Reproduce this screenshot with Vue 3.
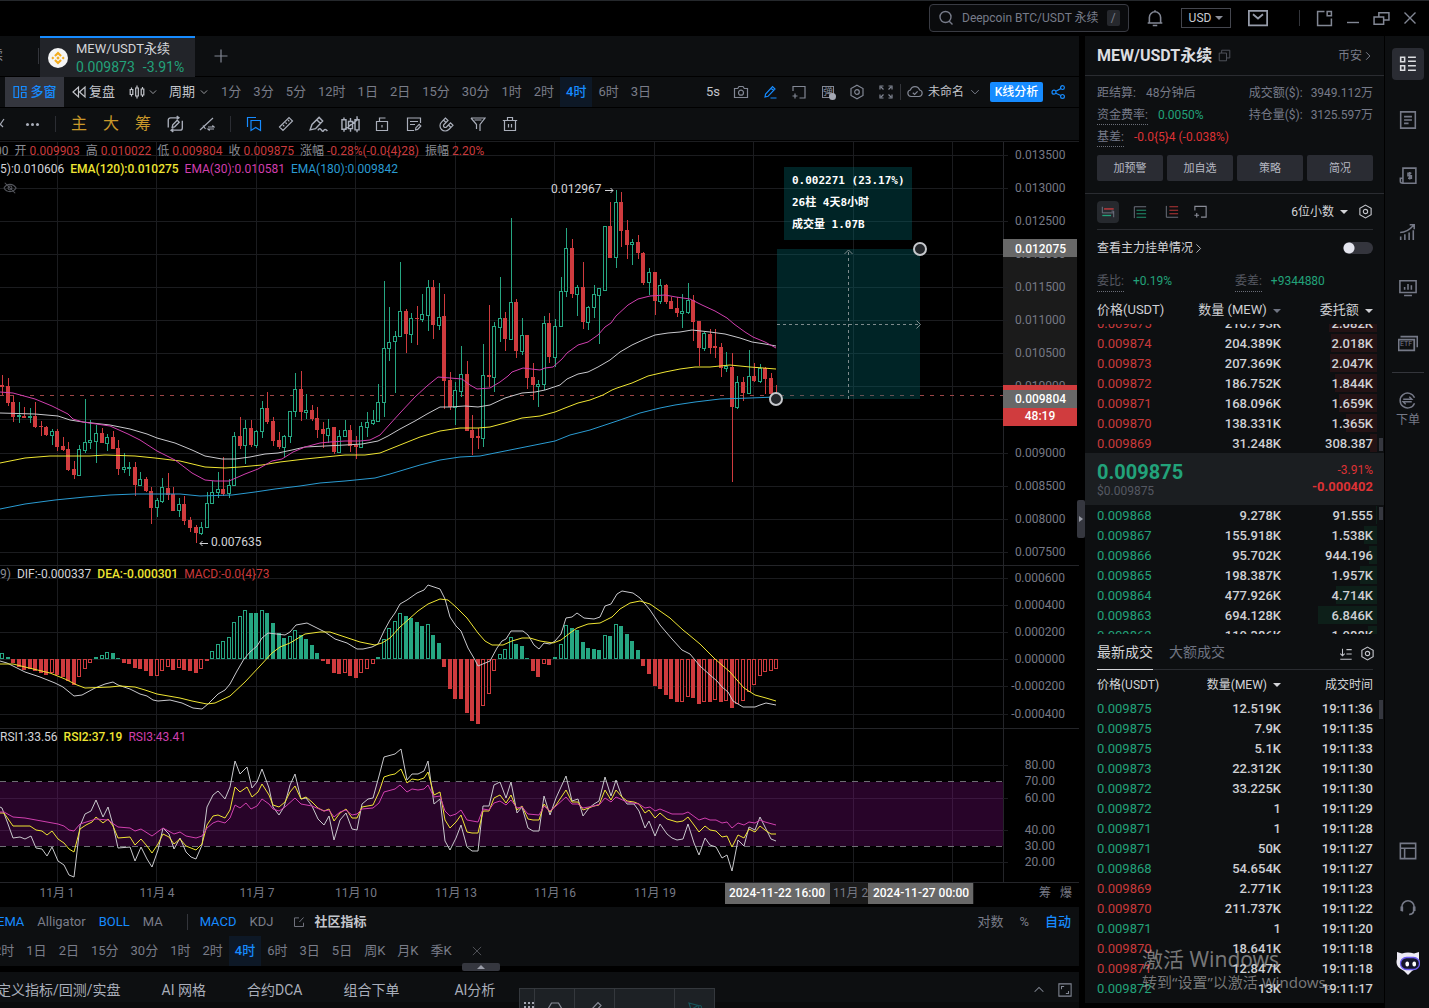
<script setup>
import { h } from 'vue'

const paths = {
  search: 'M7.5 1.5a5.5 5.5 0 1 0 0 11a5.5 5.5 0 0 0 0-11M11.5 11.5l3 3',
  bell: 'M3 12.5V7.5a5 5 0 0 1 10 0v5M1.5 12.5h13M8 1v1.5M6 14.7h4',
  mail: 'M.7 2.2h14.6v11.6H.7zM4 5l4 3.4L12 5',
  popout: 'M8 1.5H1.5v13h13V8M10.5 1.5h4v4h-4z',
  min: 'M2 12.5h12',
  restore: 'M1 6.5h9v7H1zM5.5 6.5V2.5h9.5v7H10',
  close: 'M2.5 2.5l11 11M13.5 2.5l-11 11',
  plus: 'M8 1.5v13M1.5 8h13',
  grid: 'M2 2.5h4.5v11H2zM9.5 2.5H14v3.5H9.500zM9.5 8.5H14v5H9.500z',
  rewind: 'M7.5 3v10L2 8zM14 3v10L8.5 8z',
  candles: 'M2.500 3.500v2M2.500 10.500v2M1.200 5.500h2.600v5H1.200zM8 1.500v2.500M8 12v2.500M6.700 4h2.600v8H6.700zM13.500 3v2M13.500 11v2M12.200 5h2.600v6h-2.600z',
  down: 'M3 5.5l5 5l5-5',
  up: 'M3 10l5-5l5 5',
  right: 'M5 2l6 6L5 14',
  camera: 'M1.5 4.5h3.200L6 2.5h4l1.3 2h3.200v9h-13zM8 6.2a2.500 2.500 0 1 0 0 5a2.500 2.500 0 0 0 0-5',
  pen: 'M3 13l.6-3L10.5 2.5l2.500 2.500L6 12.300zM8.500 14h6M9 4l2.500 2.500',
  addbox: 'M2 7V2.500h12V14H8.500M4 9.500v5M1.500 12h5',
  hex: 'M8 1.200l6 3.400v6.800l-6 3.400l-6-3.400V4.600zM8 5.700a2.300 2.300 0 1 0 0 4.600a2.300 2.300 0 0 0 0-4.600',
  polygon: 'M4.500 2h7l3.500 6l-3.500 6h-7L1 8z',
  marker: 'M3 13l1-4l7-7.500l3 3L7 12z',
  flag: 'M2 2l9 2.500L4 8.500zM13 4.500a1.500 2 0 1 0 0 4a1.500 2 0 0 0 0-4',
  expand: 'M2 5.500V2h3.500M10.500 2H14v3.500M14 10.500V14h-3.500M5.500 14H2v-3.500M3 3l2.500 2.500M13 3l-2.500 2.500M13 13l-2.500-2.500M3 13l2.500-2.500',
  cloud: 'M4 12.500a3.300 3.300 0 0 1-.6-6.500a4.800 4.800 0 0 1 9.200 0a3.300 3.300 0 0 1-.6 6.500zM5.800 8.800l1.800 1.700l3-3.200',
  share: 'M4 6.200a2 2 0 1 0 0 4a2 2 0 0 0 0-4M12.500 1.700a1.900 1.900 0 1 0 0 3.800a1.900 1.900 0 0 0 0-3.800M12.500 10.500a1.900 1.900 0 1 0 0 3.800a1.900 1.900 0 0 0 0-3.800M5.800 7.200l5-2.600M5.800 9.200l5 2.300',
  spark: 'M1 10l4 3L12 3M8 8l3 3',
  cyclePen: 'M2 11V4.500A2 2 0 0 1 4 2.500h7M9.500 1l2 1.500l-2 1.500M14.500 5v6.500a2 2 0 0 1-2 2H5M6.500 15L4.500 13.500L6.500 12M5.500 11l.5-2.200L10 4.700l1.700 1.700L7.700 10.500z',
  trend: 'M1 14L14 2M4 9.500l2.500 3.500M9 11h6l-1.700-1.500M15 13H9l1.700 1.500',
  bookmark: 'M1.500 11V1.500H10M5 4.500h9.500v10L9.700 11.500L5 14.500z',
  ruler: 'M1.500 11L11 1.500L14.500 5L5 14.500zM5 9l1.300 1.300M7.500 6.500l1.300 1.300M10 4l1.300 1.300',
  brush: 'M1 12.500L2.500 8L8.500 2L11.500 5L5.500 11.500zM6.500 4l3 3M7.500 13c2-4 3.500 2 4.500 .5s2-2 3.500 0',
  kbars: 'M2.500 2v2M2.500 12v2M.8 4h3.400v8H.8zM8 2.500v3M8 11.500v2.500M6.300 5.500h3.400v6H6.300zM13.500 1v3M13.500 12.500v2M11.800 4h3.400v8.500h-3.400zM2 13L14.500 3.500',
  lock: 'M2.500 5.500h11v9h-11zM5.500 5.500V2h6M8 9v2.500',
  note: 'M14.500 7V2h-13v12.500H8M4 5.500h8M4 8.500h5M9.500 14l.4-2.300l3.300-3.400l1.600 1.600l-3.200 3.500z',
  magnet: 'M7.500 2L3.500 6.200a5 5 0 0 0 7.300 7.300L15 9.300L12.500 6.800L8.500 11a1.700 1.700 0 0 1-2.500-2.500L10 4.500zM5.500 4L8 6.500M10.500 9l2.500 2.500',
  funnel: 'M1 2h14L10 8.500V15M6.500 13V8.500L1 2M4.500 4h7',
  trash: 'M.8 4.500h14.400M5.500 4.500V1.500h5v3M2.500 4.500v10h11v-10M6.500 8v3.500M9.500 8v3.500',
  eye: 'M1 8c3.500-5.500 10.500-5.500 14 0c-3.500 5.500-10.500 5.500-14 0M8 5.800a2.200 2.200 0 1 0 0 4.400a2.200 2.200 0 0 0 0-4.400M2 2l12 12',
  copy: 'M1.500 5h9v9.500h-9zM4.500 5V1.500h10v9.500h-4',
  sort: 'M4 2v8M1.500 7.500L4 10l2.500-2.500M8.500 3h6M8.500 8h6M1.500 14h13',
  list: 'M1.500 2h3.500v4H1.500zM1.500 9.500h3.500v4H1.500zM8 2h7M8 5.500h7M8 9.500h7M8 13.500h7',
  doc: 'M1.500 .8h13v14.400h-13zM4.500 5h7M4.500 8h7M4.500 11h4',
  bill: 'M3.500 1h11.500v13.500H3.500zM3.500 10H1.200v2.500a1.500 1.500 0 0 0 2.300 1.500M11 5.500H8v2.200h3V10H8M9.500 4.500v6.500',
  growth: 'M1.500 12v3M5.200 10v5M9 8.500v6.500M12.700 6.500v8.500M1 8.500c5 0 8-2 12-6.500M9.500 1.500h4v4',
  monitor: 'M.8 1.500h14.400v10.500H.8zM4.500 14.700h7M5 7v2.500M8 4.500v5M11 5.500v4',
  etf: 'M.5 4.500h12.500v8.500H.5zM2 2h13.500v8.500',
  order: 'M14.600 5.500A7 7 0 1 0 14.600 10.500M4 6.800h8L9.700 4.500M12 9.200H4l2.300 2.300',
  layout: 'M1.200 1.200h13.600v13.600H1.200zM1.200 5.500h13.600M5 5.500v9.300',
  headset: 'M2.500 8a5.500 5.500 0 0 1 11 0M2 7.500v4M3 7.500v4.500M13 7.500v4.500M14 7.500v4M13 12c-.5 2-2 2.500-4 2.700',
  edit: 'M8 2.500H2v11.500h12V9M8.500 8l5.500-6',
  frame: 'M1 1h14v14H1zM4 7V4h3M12 9v3H9',
}
const Icon = (props) =>
  h('svg', { viewBox: '0 0 16 16', width: props.size || 16, height: props.size || 16, class: 'ico', 'aria-hidden': 'true' }, [
    h('path', { d: paths[props.name] }),
  ])
Icon.props = ['name', 'size']

const periods = ['1分', '3分', '5分', '12时', '1日', '2日', '15分', '30分', '1时', '2时', '4时', '6时', '3日']
const footPeriods = ['2时', '1日', '2日', '15分', '30分', '1时', '2时', '4时', '6时', '3日', '5日', '周K', '月K', '季K']
const drawTools = ['bookmark', 'ruler', 'brush', 'kbars', 'lock', 'note', 'magnet', 'funnel', 'trash']

const STEP = 5.53
const barX = (i) => Math.round(2 + i * STEP)

// direction, high, body top, body bottom, low
const candles = `R 233 243 245 253,R 236 244 261 264,R 254 260 275 280,G 260 273 274 281,R 265 274 276 276,G 266 274 275 281,R 260 274 285 286,R 279 284 285 294,R 284 285 293 294,G 287 289 293 303
R 287 289 305 309,R 295 304 308 309,R 300 307 328 329,R 319 327 333 337,G 303 307 333 333,G 257 300 308 311,G 278 298 300 307,G 283 291 299 321,R 286 291 301 301,G 292 295 301 309
R 289 295 307 307,R 298 306 327 333,G 311 325 327 331,G 320 325 326 334,R 320 325 343 354,G 330 337 343 344,R 335 337 349 350,R 345 349 366 382,G 356 358 365 375,G 336 345 359 361
R 331 346 353 358,R 345 352 369 369,G 356 362 368 375,R 354 362 379 383,R 375 378 386 390,R 383 385 391 401,G 380 385 391 393,G 350 361 385 386,G 339 350 361 362,G 330 347 350 356
R 315 347 352 354,G 337 343 351 356,G 290 294 343 343,R 275 294 304 307,G 278 286 303 322,R 278 286 303 305,G 288 289 303 306,G 259 266 289 296,R 250 266 280 282,R 275 279 299 304
R 290 298 305 307,G 293 294 305 315,G 269 269 294 301,G 231 247 269 275,R 229 247 270 279,G 252 268 270 277,R 263 268 277 279,R 265 276 288 296,R 280 287 292 306,G 277 286 293 301
R 285 285 310 312,G 288 294 310 311,G 278 288 294 295,R 283 288 304 310,R 294 303 305 317,G 280 284 305 305,G 270 280 285 295,G 268 278 281 283,G 242 260 279 279,G 139 206 260 275
G 165 200 206 219,G 189 194 199 251,G 120 169 194 194,R 167 169 192 211,G 171 176 192 201,R 164 176 177 203,G 152 172 177 180,G 138 145 173 189,R 138 145 183 197,G 141 175 183 188
R 152 174 239 267,R 230 238 265 268,G 240 248 265 283,G 204 232 249 255,R 219 232 289 289,R 273 288 296 313,R 286 294 296 307,G 202 233 296 305,R 163 233 235 245,G 180 184 235 250
G 135 176 185 200,R 170 176 197 209,G 76 160 197 198,R 157 160 209 216,G 176 193 209 213,R 193 193 236 247,R 221 235 243 258,G 238 242 244 265,G 174 181 242 248,R 171 181 215 221
G 177 184 215 225,G 135 149 184 184,G 86 106 149 155,R 97 106 152 156,G 143 145 152 174,R 120 145 180 187,G 164 165 180 188,G 143 152 165 176,G 146 146 153 202,G 84 84 148 149
R 60 84 116 116,G 48 60 115 126,R 50 60 89 105,R 78 88 103 117,G 97 100 102 123,R 93 100 111 117,R 110 111 141 143,G 126 130 140 153,R 130 130 159 173,G 137 143 159 162
R 142 143 160 162,R 155 159 167 167,R 155 166 171 175,G 152 169 171 186,G 141 158 170 172,R 153 158 180 199,R 179 179 206 224,G 190 191 206 209,R 187 192 206 212,R 187 204 206 216
R 201 205 226 235,G 210 224 226 230,R 211 225 265 340,G 234 240 265 267,R 235 240 251 259,G 208 234 251 251,R 221 234 239 240,G 222 226 239 241,R 225 226 237 252,R 231 236 252 253,R 243 251 255 258`
  .split(/[,\n]/)
  .map((row, i) => {
    const [dir, ...v] = row.trim().split(' ')
    const [high, top, bottom, low] = v.map(Number)
    return { x: barX(i), up: dir === 'G', high, top, bottom: Math.max(bottom, top + 1), low }
  })

// signed bar height, "h" marks a hollow bar
const macd = `6h 2 -4 -8 -11 -10 -12 -14 -16 -14h -16 -18 -22 -26 -18h -10h -4h 2 4h 7h 6 1 -4 -5 -9 -10 -12 -17 -17h -12h -8h -11 -9h -11 -12 -14 -10h -2h
8h 15h 18h 22h 37h 43h 49h 46 46 49h 46 36 26 21 23h 29h 24 20 14 6 -2 -5 -14 -15 -14h -17 -19 -14h -10h -5h 2 20h 31h 38h 46h 43 41 37 33 35h 24 16
-8 -30 -40 -40 -54 -62 -65 -47h -35h -12h 5h 10h 22h 15 13 1 -12 -18 -5h -6 2 15h 34h 31 29 17 11 10 9 24h 23 35h 33 25 18 9
-7 -15 -27 -30 -36 -40 -43 -43h -38h -39 -45 -43h -43 -41h -43 -42h -49 -45h -42h -33h -26h -17h -13h -12h -10h`
  .split(/\s+/)
  .map((s, i) => {
    const n = parseInt(s)
    const hollow = s.endsWith('h')
    const size = Math.abs(n)
    return { x: barX(i), up: n > 0, hollow, y: n > 0 ? 517 - size : 517, size }
  })

const lines = [
  { c: 'blue', p: '0,367 25,362 55,358 85,355 110,353 135,352 180,352 200,354 232,353 255,350 275,347 300,344 320,341 345,339 375,336 390,332 400,329 420,323 440,318 460,315 480,314 495,311 515,307 535,303 555,299 570,293 590,288 605,283 620,278 640,271 660,266 675,263 695,260 720,257 750,256 776,255' },
  { c: 'yellow', p: '0,321 25,316 50,314 90,314 105,313 135,314 155,316 180,319 205,325 225,326 240,325 262,323 280,320 305,317 325,315 345,313 365,313 380,311 400,303 420,295 440,289 460,286 478,286 490,285 505,281 522,276 540,274 555,270 565,266 578,261 590,258 603,253 612,248 617,246 632,241 648,234 665,230 680,227 695,225 710,225 730,223 750,225 776,227' },
  { c: 'white', p: '0,271 35,272 58,274 70,278 83,280 110,283 130,287 147,292 157,296 175,301 192,308 205,314 222,317 235,317 250,315 265,312 278,311 292,308 305,305 325,304 345,303 362,302 378,299 388,294 400,287 415,279 427,272 440,265 450,265 465,264 478,265 490,263 505,256 522,251 535,250 545,248 560,243 567,237 578,232 588,230 598,225 610,218 620,210 632,203 645,197 655,193 668,191 680,190 692,188 710,190 725,192 740,196 752,200 765,202 776,204' },
  { c: 'pink', p: '0,250 13,251 35,257 52,264 68,272 73,277 83,280 110,284 128,292 140,298 157,309 175,318 192,331 205,338 215,339 229,339 245,332 258,327 272,319 282,317 293,310 305,305 320,301 330,300 345,299 360,299 370,298 380,293 390,282 400,271 415,255 427,244 438,235 450,236 462,237 470,243 477,247 490,246 500,240 508,234 512,230 523,226 540,228 545,226 553,225 562,217 567,211 578,203 588,200 598,193 605,185 611,181 616,174 628,163 638,157 650,154 665,153 676,155 690,157 702,163 715,169 727,176 734,182 745,190 753,195 765,200 776,206' },
  { c: 'white', p: '0,519 7,521 13,524 25,530 40,535 55,541 63,545 74,554 82,553 95,546 105,542 113,540 118,543 130,547 140,552 147,554 153,558 158,559 170,558 182,561 193,566 202,567 208,562 218,552 225,548 230,542 237,529 244,517 250,510 257,504 262,496 268,491 285,493 290,490 296,483 307,481 315,485 325,490 335,497 347,501 357,507 363,507 372,505 378,502 384,489 390,478 395,471 400,462 407,458 417,451 424,448 428,443 440,447 445,457 450,475 456,484 461,489 468,506 475,518 478,524 490,519 497,506 502,499 506,497 511,489 523,489 528,493 534,503 539,507 544,501 550,502 555,499 561,492 566,476 572,475 577,471 584,476 594,477 600,475 605,464 611,462 617,452 622,449 633,451 640,456 650,468 660,483 672,497 682,508 690,512 700,524 710,533 717,539 722,545 728,550 733,559 743,565 755,565 760,563 766,561 776,563' },
  { c: 'yellow', p: '0,522 13,522 25,525 50,531 65,537 77,543 85,546 110,545 120,544 135,545 145,548 157,552 180,556 192,559 207,562 215,561 230,554 245,540 260,524 272,511 280,505 290,501 305,492 320,490 330,490 345,495 360,500 375,503 382,501 390,496 400,485 418,469 428,462 440,457 448,458 456,465 467,476 478,491 485,499 492,503 503,503 512,499 522,496 530,496 540,499 553,501 561,498 570,491 577,486 588,482 600,481 612,475 620,467 630,461 640,459 650,462 660,469 670,476 683,488 688,492 700,502 715,517 730,530 744,546 755,553 766,556 776,559' },
  { c: 'white', p: '0,665 2,666 8,682 13,696 20,695 25,697 31,694 36,706 42,707 47,714 52,705 58,719 64,723 69,733 74,735 77,710 80,684 85,672 91,669 96,658 103,675 108,665 113,683 118,706 130,705 135,719 141,705 147,717 152,725 158,708 163,686 169,692 174,707 180,696 186,710 191,715 196,717 202,703 207,665 213,653 218,649 225,657 230,645 235,619 240,632 247,625 252,646 257,640 262,627 269,646 273,665 279,673 284,665 290,643 295,632 301,657 306,656 312,664 318,677 324,683 329,674 334,698 340,678 346,671 352,687 357,688 362,662 368,657 373,656 379,634 384,615 395,612 401,607 407,638 412,632 418,632 424,629 428,619 434,662 440,657 445,699 450,708 456,696 461,683 467,705 472,709 478,709 483,664 489,664 494,643 500,640 506,656 511,640 517,671 522,665 528,686 533,689 539,689 544,654 550,673 556,656 561,645 566,634 572,659 578,657 583,674 589,666 594,662 599,659 605,635 611,654 616,638 622,655 627,662 634,662 639,669 645,686 649,679 655,694 660,682 667,692 672,696 677,698 683,697 688,682 694,701 699,713 705,696 710,703 716,705 722,716 727,713 732,729 738,698 744,704 749,685 755,688 760,675 765,685 771,697 776,699' },
  { c: 'yellow', p: '0,671 4,671 13,684 30,684 36,688 42,689 47,693 52,689 58,697 64,701 69,707 74,710 80,687 86,683 92,680 96,675 103,681 108,677 113,684 118,696 130,695 135,703 141,697 147,704 152,711 158,702 163,692 169,695 174,702 180,697 186,704 196,708 202,702 207,683 213,674 218,673 225,676 230,668 235,645 240,650 247,645 252,655 258,650 262,642 269,653 273,663 279,665 285,660 290,650 295,644 301,657 306,655 312,660 318,666 324,669 329,667 334,679 340,671 346,667 352,676 357,676 362,665 373,663 379,650 384,635 390,633 395,632 401,627 407,641 412,637 418,638 424,636 428,630 434,653 440,650 445,678 450,686 456,680 461,673 467,690 472,691 478,691 483,669 489,669 494,656 500,653 506,661 511,653 517,668 522,664 528,677 533,678 539,678 544,662 550,670 556,663 566,648 572,660 578,660 583,668 594,664 599,663 605,648 611,658 616,648 622,655 627,659 634,660 639,662 645,671 649,668 655,676 660,671 667,677 677,680 683,679 688,675 694,683 699,690 705,684 710,688 716,689 722,695 727,694 732,705 738,693 744,696 749,687 755,690 760,684 765,688 771,692 776,692' },
  { c: 'pink', p: '0,670 4,670 13,675 25,676 36,678 47,680 58,682 64,684 69,688 74,689 80,682 96,677 108,678 118,685 130,686 135,689 141,687 152,694 163,686 174,692 180,690 186,694 196,696 202,694 207,686 213,681 218,679 225,681 230,676 235,663 240,666 246,661 251,667 257,664 262,657 269,662 273,667 279,669 285,665 295,656 301,662 312,664 324,669 329,668 334,675 340,670 346,668 352,673 357,672 362,667 373,666 379,661 384,650 395,647 400,643 407,650 412,647 418,648 424,647 428,643 434,655 440,654 445,669 450,674 456,672 461,668 467,678 478,680 483,667 489,668 494,661 500,659 506,663 511,658 517,666 522,665 528,672 539,673 544,664 550,669 556,664 566,655 572,662 578,662 583,666 594,664 600,662 605,656 611,660 616,655 627,660 639,662 645,666 650,665 655,669 660,667 672,672 683,672 688,670 699,678 705,676 710,678 716,678 722,681 727,680 732,686 738,681 744,683 749,680 755,681 760,678 765,680 776,683' },
]

const gridX = [57, 156, 256, 355, 455, 554, 654, 753, 853, 952]
const gridY = [13, 46, 79, 112, 145, 178, 211, 244, 277, 311, 344, 377, 410, 436, 463, 490, 517, 544, 572, 623, 656, 688, 720]
const dates = [[57, '11月 1'], [157, '11月 4'], [257, '11月 7'], [356, '11月 10'], [456, '11月 13'], [555, '11月 16'], [655, '11月 19']]
const priceTicks = [[13, '0.013500'], [46, '0.013000'], [79, '0.012500'], [112, '0.012000'], [145, '0.011500'], [178, '0.011000'], [211, '0.010500'], [244, '0.010000'], [311, '0.009000'], [344, '0.008500'], [377, '0.008000'], [410, '0.007500']]
const macdTicks = [[436, '0.000600'], [463, '0.000400'], [490, '0.000200'], [517, '0.000000'], [544, '-0.000200'], [572, '-0.000400']]
const rsiTicks = [[623, '80.00'], [639, '70.00'], [656, '60.00'], [688, '40.00'], [704, '30.00'], [720, '20.00']]

const asks = [['0.009875', '210.793K', '2.082K', 48], ['0.009874', '204.389K', '2.018K', 46], ['0.009873', '207.369K', '2.047K', 47], ['0.009872', '186.752K', '1.844K', 42], ['0.009871', '168.096K', '1.659K', 38], ['0.009870', '138.331K', '1.365K', 31], ['0.009869', '31.248K', '308.387', 7]]
const bids = [['0.009868', '9.278K', '91.555', 1], ['0.009867', '155.918K', '1.538K', 13], ['0.009866', '95.702K', '944.196', 8], ['0.009865', '198.387K', '1.957K', 17], ['0.009864', '477.926K', '4.714K', 41], ['0.009863', '694.128K', '6.846K', 59], ['0.009862', '110.386K', '1.088K', 9]]
const trades = [['0.009875', '12.519K', '19:11:36', 1], ['0.009875', '7.9K', '19:11:35', 1], ['0.009875', '5.1K', '19:11:33', 1], ['0.009873', '22.312K', '19:11:30', 1], ['0.009872', '33.225K', '19:11:30', 1], ['0.009872', '1', '19:11:29', 1], ['0.009871', '1', '19:11:28', 1], ['0.009871', '50K', '19:11:27', 1], ['0.009868', '54.654K', '19:11:27', 1], ['0.009869', '2.771K', '19:11:23', 0], ['0.009870', '211.737K', '19:11:22', 0], ['0.009871', '1', '19:11:20', 1], ['0.009870', '18.641K', '19:11:18', 0], ['0.009871', '12.847K', '19:11:18', 0], ['0.009872', '13K', '19:11:17', 1]]
</script>

<template>
  <div class="app">
    <header class="titlebar">
      <button class="searchbox"><Icon name="search" /><span>Deepcoin BTC/USDT 永续</span><kbd>/</kbd></button>
      <button class="ib bell" aria-label="通知"><Icon name="bell" size="18" /></button>
      <button class="usd">USD <i class="caret"></i></button>
      <button class="ib mail" aria-label="消息"><Icon name="mail" size="20" /></button>
      <i class="vsep"></i>
      <div class="winbtns">
        <button class="ib" aria-label="弹出"><Icon name="popout" size="17" /></button>
        <button class="ib" aria-label="最小化"><Icon name="min" /></button>
        <button class="ib" aria-label="还原"><Icon name="restore" size="17" /></button>
        <button class="ib" aria-label="关闭"><Icon name="close" /></button>
      </div>
    </header>

    <div class="body">
      <main class="left">
        <div class="tabs">
          <span class="cut">续</span>
          <button class="tab">
            <svg class="logo" viewBox="0 0 20 20" width="20" height="20"><circle cx="10" cy="10" r="10" fill="#f5f5f5" /><path fill="#f3ac1f" d="M10 3.500l3.800 3.800l-1.500 1.500L10 6.500L7.700 8.800L6.200 7.300zM10 16.500l3.800-3.800l-1.500-1.500L10 13.500l-2.300-2.300l-1.500 1.500zM10 8.300l1.700 1.700l-1.700 1.700L8.300 10zM4.800 8.500l1.500 1.500l-1.500 1.500L3.300 10zM15.200 8.500l1.500 1.500l-1.500 1.500l-1.500-1.500z" /></svg>
            <span class="tabtxt"><b>MEW/USDT永续</b><em><span>0.009873</span><span>-3.91%</span></em></span>
          </button>
          <button class="ib addtab" aria-label="新建"><Icon name="plus" /></button>
        </div>

        <div class="toolbar">
          <button class="multi"><Icon name="grid" />多窗</button>
          <button class="lite replay"><Icon name="rewind" />复盘</button>
          <button class="lite kind" aria-label="图形类型"><Icon name="candles" /><Icon name="down" size="10" /></button>
          <button class="lite cycle">周期<Icon name="down" size="10" /></button>
          <div class="periods"><button v-for="p in periods" :key="p" :class="{ on: p === '4时' }">{{ p }}</button></div>
          <div class="right">
            <button class="lite">5s</button>
            <button class="ib" aria-label="截图"><Icon name="camera" /></button>
            <button class="ib act" aria-label="画线"><Icon name="pen" /></button>
            <button class="ib" aria-label="添加"><Icon name="addbox" /></button>
            <button class="ib pop" aria-label="弹幕"><span>弹</span></button>
            <button class="ib" aria-label="设置"><Icon name="hex" /></button>
            <button class="ib" aria-label="全屏"><Icon name="expand" /></button>
            <button class="lite save"><Icon name="cloud" /><span>未命名</span><Icon name="down" size="12" /></button>
            <button class="analyze">K线分析</button>
            <button class="ib act share" aria-label="分享"><Icon name="share" /></button>
          </div>
        </div>

        <div class="drawbar">
          <button aria-label="趋势"><Icon name="spark" /></button>
          <button aria-label="更多"><span class="dots"></span></button>
          <i class="vsep"></i>
          <button class="gold">主</button><button class="gold">大</button><button class="gold">筹</button>
          <button aria-label="循环画图"><Icon name="cyclePen" size="18" /></button>
          <button aria-label="线段"><Icon name="trend" /></button>
          <i class="vsep"></i>
          <button v-for="(t, i) in drawTools" :key="t" :class="{ act: i === 0 }" :aria-label="t"><Icon :name="t" :size="t === 'kbars' || t === 'brush' ? 19 : 16" /></button>
        </div>

        <section class="chart">
          <svg class="plot" height="763">
            <g class="grid">
              <line v-for="y in gridY" :key="'h' + y" x1="0" x2="100%" :y1="y + 0.5" :y2="y + 0.5" />
              <line v-for="x in gridX" :key="'v' + x" :x1="x + 0.5" :x2="x + 0.5" y1="0" y2="740" />
            </g>
            <g class="divs">
              <line v-for="y in [423, 586, 740]" :key="y" x1="0" x2="100%" :y1="y + 0.5" :y2="y + 0.5" />
            </g>
            <rect class="band" x="0" y="640" width="100%" height="64" />
            <line class="dash" x1="0" x2="100%" y1="639.5" y2="639.5" />
            <line class="dash" x1="0" x2="100%" y1="704.5" y2="704.5" />
            <line class="last" x1="0" x2="100%" y1="253.5" y2="253.5" />
            <g shape-rendering="crispEdges">
              <g v-for="c in candles" :key="c.x" :class="c.up ? 'up' : 'dn'">
                <rect class="fill" :x="c.x" :y="c.high" width="1" :height="c.low - c.high" />
                <rect v-if="c.up" class="hollow" :x="c.x - 1.5" :y="c.top + 0.5" width="3" :height="c.bottom - c.top" />
                <rect v-else class="fill" :x="c.x - 2" :y="c.top" width="4" :height="c.bottom - c.top" />
              </g>
              <g v-for="b in macd" :key="'m' + b.x" :class="b.up ? 'up' : 'dn'">
                <rect v-if="b.hollow" class="hollow" :x="b.x - 1.5" :y="b.y + 0.5" width="3" :height="b.size - 1" />
                <rect v-else class="fill" :x="b.x - 2" :y="b.y" width="4" :height="b.size" />
              </g>
            </g>
            <polyline v-for="(l, i) in lines" :key="i" :class="['ln', l.c]" :points="l.p" />
            <rect class="measure" x="777" y="107" width="143" height="150" />
            <path class="arrow" d="M848.500 257V108" />
            <path class="arrow" d="M777 182.500H920" />
            <path class="tip" d="M844.500 112l4-4l4 4M916.500 178.500l4 4l-4 4" />
            <circle class="knob" cx="776" cy="257" r="6" />
            <circle class="knob" cx="920" cy="107" r="6" />
            <text class="mark" x="551" y="51">0.012967</text>
            <path class="marr" d="M605 48.500h8M610.500 46l2.500 2.500l-2.500 2.500" />
            <text class="mark" x="211" y="404">0.007635</text>
            <path class="marr" d="M208 401.500h-8M202.500 399l-2.500 2.500l2.500 2.500" />
            <g class="axis">
              <text v-for="d in dates" :key="d[0]" :x="d[0]" y="755" text-anchor="middle">{{ d[1] }}</text>
              <rect x="725" y="741" width="249" height="21" fill="#1b1b1b" />
              <text x="833" y="755">11月 2</text>
              <rect x="725" y="741" width="105" height="21" fill="#686868" />
              <rect x="868" y="741" width="105" height="21" fill="#686868" />
              <text class="hl" x="777" y="755" text-anchor="middle">2024-11-22 16:00</text>
              <text class="hl" x="921" y="755" text-anchor="middle">2024-11-27 00:00</text>
            </g>
          </svg>
          <svg class="scale" width="76" height="763">
            <g class="divs"><line v-for="y in [423, 586, 740]" :key="y" x1="0" x2="76" :y1="y + 0.5" :y2="y + 0.5" /><line x1="0.5" x2="0.5" y1="0" y2="740" /></g>
            <rect x="0" y="107" width="74" height="150" fill="#1b1b1b" />
            <g class="grid"><line v-for="y in gridY" :key="y" x1="0" x2="5" :y1="y + 0.5" :y2="y + 0.5" /></g>
            <g class="axis">
              <text v-for="t in priceTicks" :key="t[1]" x="12" :y="t[0] + 4">{{ t[1] }}</text>
              <text v-for="t in macdTicks" :key="t[1]" x="62" :y="t[0] + 4" text-anchor="end">{{ t[1] }}</text>
              <text v-for="t in rsiTicks" :key="t[1]" x="52" :y="t[0] + 4" text-anchor="end">{{ t[1] }}</text>
              <text x="36" y="755">筹</text><text x="57" y="755">爆</text>
              <rect x="0" y="97" width="74" height="18" fill="#686868" />
              <text class="hl" x="12" y="111">0.012075</text>
              <rect x="0" y="243" width="74" height="41" fill="#d03c3e" />
              <rect x="0" y="248" width="74" height="18" fill="#686868" />
              <text class="hl" x="12" y="261">0.009804</text>
              <text class="hl" x="37" y="278" text-anchor="middle">48:19</text>
            </g>
          </svg>
          <div class="legend ohlc">
            <span>00</span><span>开 <i>0.009903</i></span><span>高 <i>0.010022</i></span><span>低 <i>0.009804</i></span><span>收 <i>0.009875</i></span><span>涨幅 <i>-0.28%(-0.0{4}28)</i></span><span>振幅 <i>2.20%</i></span>
          </div>
          <div class="legend ema"><span class="w">5):0.010606</span><span class="y">EMA(120):0.010275</span><span class="p">EMA(30):0.010581</span><span class="b">EMA(180):0.009842</span></div>
          <button class="ib eye" aria-label="隐藏"><Icon name="eye" size="14" /></button>
          <div class="legend macdl"><span>9)</span><span class="w">DIF:-0.000337</span><span class="y">DEA:-0.000301</span><span class="r">MACD:-0.0{4}73</span></div>
          <div class="legend rsil"><span class="w">RSI1:33.56</span><span class="y">RSI2:37.19</span><span class="p">RSI3:43.41</span></div>
          <div class="tooltip">0.002271 (23.17%)<br />26柱 4天8小时<br />成交量 1.07B</div>
          <button class="fold" aria-label="收起侧栏"></button>
        </section>

        <section class="foot">
          <div class="inds">
            <button class="on">EMA</button><button>Alligator</button><button class="on">BOLL</button><button>MA</button>
            <i class="vsep"></i>
            <button class="on">MACD</button><button>KDJ</button>
            <button class="comm"><Icon name="edit" size="12" /><b>社区指标</b></button>
            <div class="right"><button>对数</button><button>%</button><button class="on"><b>自动</b></button></div>
          </div>
          <div class="periods fp"><button v-for="(p, i) in footPeriods" :key="i" :class="{ on: p === '4时' }">{{ p }}</button><button class="x" aria-label="关闭"><Icon name="close" size="12" /></button></div>
          <button class="unfold" aria-label="展开"></button>
        </section>

        <nav class="bottom">
          <a href="#">定义指标/回测/实盘</a><a href="#">AI 网格</a><a href="#">合约DCA</a><a href="#">组合下单</a><a href="#">AI分析</a>
          <div class="right"><button class="ib" aria-label="展开"><Icon name="up" size="14" /></button><button class="ib" aria-label="最大化"><Icon name="frame" size="14" /></button></div>
        </nav>
      </main>

      <aside class="panel">
        <div class="ptitle"><h1>MEW/USDT永续</h1><Icon name="copy" size="13" /><a href="#">币安<Icon name="right" size="10" /></a></div>
        <div class="stats">
          <p><span>距结算:</span><span class="v">48分钟后</span><span class="rt"><span>成交额($):</span><span>3949.112万</span></span></p>
          <p><span class="u">资金费率:</span><span class="v g">0.0050%</span><span class="rt"><span>持仓量($):</span><span>3125.597万</span></span></p>
          <p><span class="u">基差:</span><span class="v r">-0.0{5}4 (-0.038%)</span></p>
        </div>
        <div class="pbtns"><button>加预警</button><button>加自选</button><button>策略</button><button>简况</button></div>
        <div class="modes">
          <button class="sel" aria-label="买卖盘"><svg viewBox="0 0 16 16" width="14" height="14"><path d="M1.500 2v7h13M14.500 14V7H12" stroke="#777b8a" /><path d="M3.500 4.500h11" stroke="#cf3b3e" stroke-width="1.500" /><path d="M1.500 12h10" stroke="#22a27a" stroke-width="1.500" /></svg></button>
          <button aria-label="买盘"><svg viewBox="0 0 16 16" width="14" height="14"><path d="M1.500 15V2H15" stroke="#777b8a" /><path d="M4 6h11M4 10h11M4 14h11" stroke="#22a27a" /></svg></button>
          <button aria-label="卖盘"><svg viewBox="0 0 16 16" width="14" height="14"><path d="M1.500 1v13H15" stroke="#777b8a" /><path d="M5 2h10M5 6h10M5 10h10" stroke="#cf3b3e" /></svg></button>
          <button class="slim" aria-label="添加"><Icon name="addbox" size="15" /></button>
          <button class="prec">6位小数 <i class="caret"></i></button>
          <button class="slim cfg" aria-label="设置"><Icon name="hex" size="15" /></button>
        </div>
        <div class="mainforce"><label for="mf">查看主力挂单情况<Icon name="right" size="11" /></label><input id="mf" type="checkbox" role="switch" /></div>
        <div class="ratio"><span class="u">委比:</span><span class="g">+0.19%</span><span class="u second">委差:</span><span class="g">+9344880</span></div>
        <div class="book">
          <div class="row hd"><span>价格(USDT)</span><span>数量 (MEW) <i class="caret dim"></i></span><span>委托额 <i class="caret"></i></span></div>
          <div class="rows asks">
            <div v-for="r in asks" :key="r[0]" class="row"><i class="depth" :style="{ width: r[3] + 'px' }"></i><span class="r">{{ r[0] }}</span><span>{{ r[1] }}</span><span>{{ r[2] }}</span></div>
          </div>
          <div class="mid"><div><strong>0.009875</strong><small>$0.009875</small></div><div class="chg"><span>-3.91%</span><b>-0.000402</b></div></div>
          <div class="rows bids">
            <div v-for="r in bids" :key="r[0]" class="row"><i class="depth" :style="{ width: r[3] + 'px' }"></i><span class="g">{{ r[0] }}</span><span>{{ r[1] }}</span><span>{{ r[2] }}</span></div>
          </div>
        </div>
        <div class="ttabs"><button class="on">最新成交</button><button>大额成交</button><span class="ticons"><Icon name="sort" size="14" /><Icon name="hex" size="15" /></span></div>
        <div class="tbox">
          <table class="trades">
            <thead><tr><th>价格(USDT)</th><th>数量(MEW) <i class="caret"></i></th><th>成交时间</th></tr></thead>
            <tbody><tr v-for="(t, i) in trades" :key="i"><td :class="t[3] ? 'g' : 'r'">{{ t[0] }}</td><td>{{ t[1] }}</td><td>{{ t[2] }}</td></tr></tbody>
          </table>
        </div>
      </aside>

      <nav class="side">
        <button class="sel" aria-label="行情"><Icon name="list" size="18" /></button>
        <button aria-label="公告"><Icon name="doc" size="18" /></button>
        <button aria-label="资产"><Icon name="bill" size="18" /></button>
        <button aria-label="走势"><Icon name="growth" size="18" /></button>
        <button aria-label="监控"><Icon name="monitor" size="18" /></button>
        <button class="etf" aria-label="ETF"><Icon name="etf" size="20" /><span>ETF</span></button>
        <hr />
        <button class="ord"><Icon name="order" size="17" />下单</button>
        <div class="sidebot">
          <button aria-label="布局"><Icon name="layout" size="18" /></button>
          <button aria-label="客服"><Icon name="headset" size="18" /></button>
          <button aria-label="助手">
            <svg viewBox="0 0 24 24" width="24" height="24"><path d="M1 1l5 1.500c4-1.500 8-1.500 12 0l5-1.500v7c1 3 .5 7-3 9.500l-4 2.500l-4 4l-4-4l-4-2.500c-3.500-2.500-4-6.500-3-9.500z" fill="#eceaf5" /><rect x="4.500" y="6.500" width="19" height="12" rx="6" fill="#15162b" stroke="#6c5cf0" stroke-width="1.300" /><rect x="9.500" y="10.500" width="3.500" height="5" rx="1.700" fill="#fff" /><rect x="16.500" y="10.500" width="3.500" height="5" rx="1.700" fill="#fff" /></svg>
          </button>
        </div>
      </nav>
    </div>

    <div class="floatbar"><span class="grip"></span><button aria-label="形状"><Icon name="polygon" /></button><button aria-label="线条"><Icon name="marker" /></button><button class="wide" aria-label="线宽"><i></i></button><button class="teal" aria-label="填充"><Icon name="flag" /></button></div>
    <div class="watermark"><p>激活 Windows</p><small>转到“设置”以激活 Windows。</small></div>
  </div>
</template>

<style>
body { background: #000; }
</style>

<style scoped>
* { box-sizing: border-box; }
.app { position: relative; min-height: 100vh; overflow: hidden; display: flex; flex-direction: column; background: #000; color: #d3d4d8; font: 13px/20px Roboto, "Noto Sans CJK SC", sans-serif; }
button { background: none; border: 0; padding: 0; color: inherit; font: inherit; display: flex; align-items: center; justify-content: center; white-space: nowrap; }
a { color: inherit; text-decoration: none; }
i, em { font-style: normal; }
p, h1 { margin: 0; }
.ico { fill: none; stroke: currentColor; stroke-width: 1.2; flex: none; display: block; }
.ib { color: #828794; }
.caret { display: inline-block; border: 4px solid transparent; border-top-color: currentColor; border-bottom: 0; vertical-align: middle; }
.caret.dim { color: #6f7482; }
.vsep { width: 1px; height: 16px; background: #33353b; }
.g { color: #22a27a; }
.r { color: #c93a3c; }
.act { color: #168bff; }
.right { margin-left: auto; display: flex; align-items: center; }

.titlebar { height: 36px; border-top: 1px solid #25282c; display: flex; align-items: center; justify-content: flex-end; padding: 0 11px 1px 0; flex: none; }
.titlebar .ico { stroke-width: 1.4; }
.searchbox { width: 200px; height: 28px; border: 1px solid #393b43; border-radius: 4px; justify-content: flex-start; padding: 0 8px; gap: 8px; color: #777b89; background: #0a0b0d; font-size: 12px; }
.searchbox kbd { margin-left: auto; width: 16px; height: 16px; border-radius: 2px; background: #26282d; font: inherit; line-height: 16px; }
.bell { margin-left: 17px; }
.usd { margin-left: 17px; width: 50px; height: 20px; border: 1px solid #44464e; gap: 4px; color: #c9cbd1; font-size: 12px; }
.usd .caret { color: #8a8d98; }
.mail { margin-left: 17px; color: #969caa; }
.titlebar .vsep { margin-left: 31px; }
.winbtns { margin-left: 16px; display: flex; gap: 12px; }

.body { flex: 1; display: flex; min-height: 0; }
.left { flex: 1; min-width: 0; display: flex; flex-direction: column; margin-right: 6px; }
.tabs { height: 40px; background: #0d0f11; display: flex; align-items: center; flex: none; }
.cut { width: 39px; height: 16px; border-right: 1px solid #33353b; line-height: 1; direction: rtl; overflow: hidden; text-indent: 35px; color: #8a8d98; }
.tab { width: 155px; height: 41px; align-self: flex-start; margin-left: 1px; border-top: 2px solid #168bff; background: #222429; justify-content: flex-start; padding-left: 8px; gap: 8px; position: relative; }
.tabtxt { display: flex; flex-direction: column; align-items: flex-start; line-height: 19px; }
.tabtxt b { font-weight: 400; color: #d3d4d8; }
.tabtxt em { display: flex; gap: 8px; font-size: 14px; color: #22a27a; }
.addtab { margin-left: 18px; }
.toolbar { height: 30px; margin-top: 1px; background: #0d0f11; display: flex; align-items: center; flex: none; padding: 0 13px 0 5px; }
.lite { color: #c3c5cb; }
.multi { width: 59px; height: 30px; background: #34363e; color: #168bff; gap: 2px; font-weight: 500; }
.replay { margin-left: 7px; gap: 2px; }
.kind { margin-left: 14px; gap: 3px; }
.cycle { margin-left: 11px; gap: 4px; }
.periods { display: flex; }
.toolbar .periods { margin-left: 6px; }
.periods button { height: 30px; padding: 0 6px; color: #7a7d89; }
.periods button.on { background: #0d1826; color: #168bff; font-weight: 500; }
.toolbar .right { gap: 13px; }
.pop { width: 16px; }
.pop span { width: 12px; height: 12px; border: 1px solid #828794; font-size: 10px; line-height: 10px; position: relative; }
.pop span::after { content: ""; position: absolute; right: -3px; bottom: -3px; width: 7px; height: 7px; border-radius: 50%; background: #a4a7b2; }
.save { gap: 5px; font-size: 12px; position: relative; }
.save::before { content: ""; position: absolute; left: -7px; width: 1px; height: 16px; background: #33353b; }
.save .ico { color: #828794; }
.analyze { width: 53px; height: 20px; background: #168bff; color: #fff; border-radius: 2px; font-size: 12px; font-weight: 500; }
.toolbar .analyze { margin-left: -4px; }
.toolbar .share { margin-left: -6px; }

.drawbar { height: 32px; margin-top: 1px; background: #0d0f11; display: flex; align-items: center; flex: none; }
.drawbar button { width: 32px; height: 32px; flex: none; color: #a9aeba; }
.drawbar button:first-child { margin-left: -16px; }
.drawbar .vsep { margin: 0 7px; background: #2b2d33; }
.drawbar .gold { color: #c9982a; font-size: 16px; }
.drawbar .act { color: #168bff; }
.dots { width: 3px; height: 3px; border-radius: 50%; background: currentColor; box-shadow: 5px 0, -5px 0; }

.chart { position: relative; height: 764px; margin-top: 1px; border-top: 1px solid #1c1d20; display: flex; flex: none; }
.plot { flex: 1; min-width: 0; }
.scale { flex: none; }
.grid line { stroke: #1b1c1f; stroke-width: 1; }
.divs line { stroke: #242529; stroke-width: 1; }
.band { fill: #8a0f8f; fill-opacity: .29; }
.dash { stroke: #6e6e74; stroke-dasharray: 6 6; }
.last { stroke: #9c4547; stroke-dasharray: 4 6; }
.up .fill { fill: #26a682; }
.dn .fill { fill: #cf3b3e; }
.hollow { fill: #000; stroke-width: 1; }
.up .hollow { stroke: #26a682; }
.dn .hollow { stroke: #cf3b3e; }
.ln { fill: none; stroke-width: 1; }
.ln.white { stroke: #c8c8cc; }
.ln.yellow { stroke: #efe533; }
.ln.pink { stroke: #d03fae; }
.ln.blue { stroke: #2a9bd2; }
.measure { fill: #00686c; fill-opacity: .35; }
.arrow { stroke: #7d8a8c; stroke-dasharray: 3 3; fill: none; }
.tip { stroke: #7d8a8c; fill: none; }
.knob { fill: #24272b; stroke: #c6c8cc; stroke-width: 2; }
.mark { fill: #d3d4d8; font-size: 12px; }
.marr { stroke: #d3d4d8; fill: none; }
.axis text { fill: #767985; font-size: 12px; }
.axis .hl { fill: #fff; font-weight: 500; }
.legend { position: absolute; left: 0; display: flex; gap: 6px; font-size: 12px; line-height: 16px; color: #8a8c94; white-space: nowrap; }
.ohlc { top: 1px; left: -5px; }
.ohlc i { color: #c93a3c; }
.ema { top: 19px; }
.legend .w { color: #d3d4d8; }
.legend .y { color: #efe533; font-weight: 500; }
.legend .p { color: #d03fae; }
.legend .b { color: #2a9bd2; }
.macdl { top: 424px; }
.rsil { top: 587px; }
.eye { position: absolute; left: 3px; top: 39px; color: #55575e; }
.tooltip { position: absolute; left: 784px; top: 25px; width: 128px; padding: 3px 8px 4px; background: rgba(0, 104, 108, .35); color: #fff; font: bold 11px/22px "DejaVu Sans Mono", "Noto Sans CJK SC", monospace; white-space: nowrap; }
.fold { position: absolute; right: -6px; top: 358px; width: 8px; height: 38px; background: #35373f; border-radius: 2px; }
.fold::after { content: ""; border: 3px solid transparent; border-left: 4px solid #9a9da8; border-right: 0; }

.foot { position: relative; margin-top: 2px; padding-top: 1px; background: #0d0f11; flex: none; }
.inds { display: flex; align-items: center; height: 28px; gap: 13px; padding-right: 8px; color: #7a7d89; }
.inds button:first-child { margin-left: -3px; }
.inds .on { color: #168bff; }
.inds .vsep { margin-left: 11px; margin-right: -1px; }
.comm { margin-left: 7px; gap: 9px; }
.comm b { color: #c3c5cb; }
.inds .right { gap: 16px; }
.inds b { font-weight: 700; }
.inds .right b { font-weight: 500; }
.fp { margin-left: -12px; height: 30px; }
.fp .x { margin-left: 7px; color: #55575e; }
.unfold { position: absolute; left: 462px; bottom: -5px; width: 38px; height: 8px; background: #35373f; border-radius: 2px; }
.unfold::after { content: ""; border: 4px solid transparent; border-bottom-color: #9a9da8; border-top: 0; }
.bottom { height: 30px; margin-top: 6px; background: #0d0f11; display: flex; align-items: center; flex: none; font-size: 14px; padding: 6px 7px 0 0; white-space: nowrap; color: #a9aeba; box-shadow: 0 6px #0a0b0c; }
.bottom a { margin-right: 41px; }
.bottom a:first-child { margin-left: -3px; }
.bottom a:nth-child(4) { margin-right: 55px; }
.bottom .right { gap: 12px; }

.panel { width: 299px; flex: none; background: #0d0f11; margin-bottom: 6px; }
.ptitle { height: 40px; display: flex; align-items: center; padding: 0 11px 0 12px; border-bottom: 1px solid #2a2c31; }
.ptitle h1 { font-size: 16px; font-weight: 700; color: #dcdde0; margin-right: 6px; }
.ptitle .ico { color: #50535b; }
.ptitle a { margin-left: auto; display: flex; align-items: center; font-size: 12px; color: #7a7d89; gap: 1px; }
.ptitle a .ico { color: #7a7d89; stroke-width: 1.6; }
.stats { padding: 6px 11px 0 12px; font-size: 12px; line-height: 18px; color: #767a88; }
.stats p { display: flex; align-items: center; height: 22px; }
.stats .v { margin-left: 10px; }
.stats .g { color: #22a27a; }
.stats .r { color: #dd3235; }
.rt { margin-left: auto; display: flex; gap: 8px; }
.u { border-bottom: 1px dotted #6a6d78; }
.pbtns { display: grid; grid-template-columns: repeat(4, 1fr); gap: 4px; padding: 7px 11px 12px 12px; border-bottom: 1px solid #2a2c31; }
.pbtns button { height: 26px; background: #2a2c33; color: #b5b8c2; font-size: 11px; border-radius: 2px; padding-top: 1px; }
.modes { display: flex; align-items: center; height: 36px; margin: 0 11px 0 12px; border-bottom: 1px solid #2a2c31; gap: 10px; color: #8a8d98; }
.modes button { width: 22px; height: 22px; border-radius: 4px; }
.modes svg { fill: none; }
.modes .sel { background: #26292e; }
.modes .prec { width: auto; margin-left: auto; gap: 6px; font-size: 12px; color: #d3d4d8; }
.modes .slim { width: 15px; }
.modes .cfg { color: #c3c5cb; }
.mainforce { display: flex; align-items: center; justify-content: space-between; height: 36px; margin: 0 11px 0 12px; font-size: 12px; }
.mainforce label { display: flex; align-items: center; }
.mainforce input { appearance: none; margin: 0; width: 30px; height: 12px; border-radius: 6px; background: radial-gradient(circle at 6px 6px, #e4e5ee 5px, #34353d 6px); }
.ratio { display: flex; align-items: center; height: 30px; margin: 0 12px; gap: 9px; font-size: 12px; color: #555861; }
.second { margin-left: 54px; }
.row { position: relative; display: grid; grid-template-columns: 84px 100px 1fr; height: 20px; flex: none; padding: 0 11px 0 12px; line-height: 21px; color: #cfd0d4; }
.row span { position: relative; white-space: nowrap; }
.row span + span { text-align: right; font-weight: 500; }
.row.hd { height: 28px; line-height: 28px; }
.row.hd span { font-weight: 400; }
.hd .caret, .trades .caret { margin-left: 3px; }
.rows { height: 129px; overflow: hidden; display: flex; flex-direction: column; position: relative; }
.asks { justify-content: flex-end; }
.rows::after { content: ""; position: absolute; right: 1px; width: 4px; height: 13px; background: #35373f; }
.asks::after { bottom: 2px; }
.bids::after { top: 2px; }
.depth { position: absolute; right: 7px; top: 1px; height: 18px; background: #231214; }
.bids .depth { background: #0d1f19; }
.mid { height: 52px; background: #1b1e21; display: flex; justify-content: space-between; padding: 8px 11px 0 12px; }
.mid > div { display: flex; flex-direction: column; }
.mid strong { font-size: 20px; line-height: 22px; font-weight: 700; color: #22a27a; }
.mid small { font-size: 12px; line-height: 16px; color: #555861; }
.mid .chg { align-items: flex-end; font-size: 12px; line-height: 18px; color: #dd3235; }
.chg b { font-size: 13px; line-height: 16px; }
.ttabs { height: 36px; margin: 0 11px 0 12px; display: flex; gap: 16px; border-bottom: 1px solid #2a2c31; font-size: 14px; color: #6f7482; }
.ttabs .on { color: #d3d4d8; border-bottom: 1px solid #d3d4d8; height: 36px; }
.ticons { margin: 4px -2px 0 auto; display: flex; align-items: center; gap: 7px; color: #c3c5cb; }
.tbox { position: relative; padding: 0 11px 4px 12px; }
.tbox::after { content: ""; position: absolute; right: 1px; top: 30px; width: 4px; height: 19px; background: #35373f; }
.trades { width: 100%; border-collapse: collapse; table-layout: fixed; }
.trades th { height: 29px; padding: 0; font-weight: 400; font-size: 12px; text-align: right; }
.trades td { height: 20px; padding: 0; line-height: 20px; text-align: right; font-weight: 500; color: #cfd0d4; }
.trades th:first-child, .trades td:first-child { text-align: left; width: 84px; font-weight: 400; }
.trades th:nth-child(2) { width: 100px; }
.trades td.g { color: #22a27a; }
.trades td.r { color: #c93a3c; }

.side { width: 44px; flex: none; margin-left: 1px; background: #0d0f11; display: flex; flex-direction: column; align-items: center; padding: 12px 0 0 2px; color: #757987; }
.side button { width: 32px; height: 32px; margin-bottom: 24px; border-radius: 4px; flex: none; }
.side .ico { stroke-width: 1.4; }
.side .sel { background: #2a2c33; color: #dcdde0; }
.side .etf { position: relative; margin-bottom: 12px; }
.side .etf span { position: absolute; left: 8px; top: 11px; font-size: 7px; line-height: 10px; }
.side hr { width: 32px; height: 1px; border: 0; margin: 0 0 20px; background: #33353b; }
.side .ord { flex-direction: column; height: 36px; width: auto; font-size: 12px; line-height: 20px; gap: 1px; }
.sidebot { margin-top: auto; padding-bottom: 6px; }

.floatbar { position: absolute; left: 519px; bottom: 0; width: 196px; height: 21px; overflow: hidden; background: #1d2125; border: 1px solid #34383d; border-bottom: 0; display: flex; align-items: flex-start; color: #8a8d98; }
.floatbar button { width: 40px; height: 40px; flex: none; border-left: 1px solid #34383d; }
.floatbar .wide { width: 60px; }
.floatbar .wide i { width: 8px; height: 2px; margin-left: 40px; background: #a4a7b2; }
.floatbar .teal { color: #17545a; }
.grip { width: 14px; height: 10px; margin-top: 12px; padding-left: 3px; flex: none; background: radial-gradient(circle, #a4a7b2 1px, transparent 1px) content-box 0 0 / 4px 4px; }
.watermark { position: absolute; left: 1142px; bottom: 17px; color: rgba(190, 190, 190, .6); pointer-events: none; white-space: nowrap; font-family: "Noto Sans", "Noto Sans CJK SC", sans-serif; }
.watermark p { font-size: 21px; line-height: 26px; }
.watermark small { font-size: 15px; line-height: 20px; display: block; }
</style>
